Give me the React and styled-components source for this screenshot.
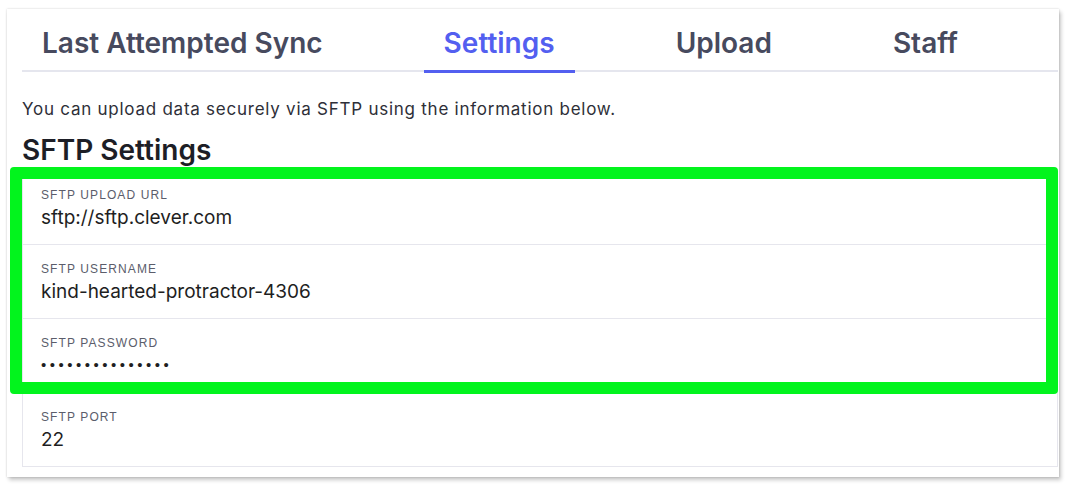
import React from 'react';
import styled, { createGlobalStyle } from 'styled-components';

const GlobalStyle = createGlobalStyle`
    * { box-sizing: border-box; }
    body {
        margin: 0;
        background: #fff;
        font-family: Inter, "Noto Sans", sans-serif;
    }
`

const Page = styled.div`
    padding: 9px 13px 16px 7px;
    width: 1072px;
`

const Card = styled.div`
    background: #fff;
    padding: 0 1px 10px 15px;
    box-shadow: 0 0 2px rgba(0,0,0,0.18), 2px 3px 4px rgba(0,0,0,0.22);
`

const TabBar = styled.div`
    display: flex;
    gap: 81px;
    border-bottom: 2px solid #e5e6ee;
`

const Tab = styled.div`
    padding: 19px 20px 12px;
    margin-bottom: -3px;
    font-size: 28px;
    line-height: 30px;
    font-weight: 600;
    color: ${props => props.active ? '#535ff0' : '#474a5e'};
    border-bottom: 3px solid ${props => props.active ? '#535ff0' : 'transparent'};
    white-space: nowrap;
`

const Intro = styled.p`
    margin: 27px 0 0;
    font-size: 17px;
    line-height: 20px;
    letter-spacing: 0.75px;
    color: #2e2f38;
`

const Heading = styled.h2`
    margin: 16px 0 0;
    font-size: 28px;
    line-height: 30px;
    font-weight: 600;
    color: #1d1e26;
`

const FieldList = styled.div`
    margin-top: 6px;
`

const Highlight = styled.div`
    position: relative;
`

// green annotation frame drawn over the first three fields
const HighlightFrame = styled.div`
    position: absolute;
    top: -4px;
    left: -12px;
    right: 0;
    bottom: -1px;
    border: 12px solid #02f41d;
    border-radius: 4px;
    pointer-events: none;
`

const Row = styled.div`
    height: 74px;
    padding: 17px 18px 0;
    border: 1px solid #e6e6ed;
    border-top: none;
`

const Label = styled.div`
    font-family: "Liberation Sans", Arial, sans-serif;
    font-size: 12px;
    line-height: 14px;
    letter-spacing: 1.1px;
    text-transform: uppercase;
    color: #5b5d6b;
`

const Value = styled.div`
    margin-top: 5px;
    height: 22px;
    font-family: ${props => props.secret ? '"Liberation Sans", Arial' : 'Inter'}, sans-serif;
    font-size: ${props => props.secret ? '15px' : '19px'};
    line-height: ${props => props.secret ? '20px' : '22px'};
    letter-spacing: ${props => props.secret ? '3.5px' : '0'};
    color: #1e1e22;
`

const Field = ({ label, value, secret }) => (
    <Row>
        <Label>{label}</Label>
        <Value secret={secret}>{value}</Value>
    </Row>
)

const tabs = ['Last Attempted Sync', 'Settings', 'Upload', 'Staff']

const App = () => (
    <>
        <GlobalStyle />
        <Page>
            <Card>
                <TabBar>
                    {tabs.map(t => (
                        <Tab key={t} active={t === 'Settings'}>{t}</Tab>
                    ))}
                </TabBar>
                <Intro>You can upload data securely via SFTP using the information below.</Intro>
                <Heading>SFTP Settings</Heading>
                <FieldList>
                    <Highlight>
                        <Field label="SFTP Upload URL" value="sftp://sftp.clever.com" />
                        <Field label="SFTP Username" value="kind-hearted-protractor-4306" />
                        <Field label="SFTP Password" value={'\u2022'.repeat(15)} secret />
                        <HighlightFrame />
                    </Highlight>
                    <Field label="SFTP Port" value="22" />
                </FieldList>
            </Card>
        </Page>
    </>
)

export default App;
